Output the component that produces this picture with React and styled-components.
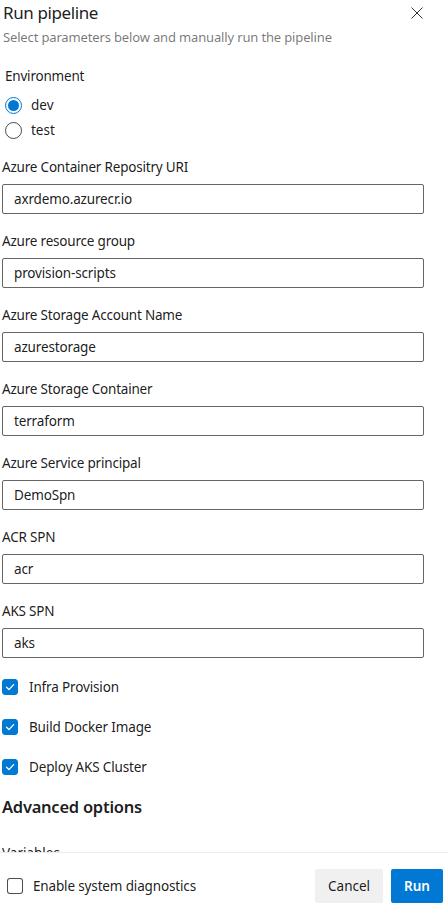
import React from 'react';
import styled, { createGlobalStyle } from 'styled-components';

const GlobalStyle = createGlobalStyle`
  html, body {
    margin: 0;
    padding: 0;
    background: #fff;
  }
  body {
    font-family: "Noto Sans", "Open Sans", sans-serif;
    color: rgba(0, 0, 0, 0.9);
  }
`;

const Panel = styled.div`
  display: flex;
  flex-direction: column;
  width: 448px;
  height: 906px;
  overflow: hidden;
  background: #fff;
`;

const Scroll = styled.div`
  flex: 1;
  overflow: hidden;
  padding: 0 24px 0 2px;
`;

const Header = styled.div`
  display: flex;
  justify-content: space-between;
  align-items: flex-start;
  padding: 0 0 0 1px;
`;

const Title = styled.h1`
  margin: 0;
  font-size: 17px;
  font-weight: 400;
  line-height: 25px;
  letter-spacing: -0.4px;
`;

const Subtitle = styled.div`
  margin-top: 3px;
  font-size: 13px;
  line-height: 18px;
  color: rgba(0, 0, 0, 0.55);
  letter-spacing: -0.15px;
`;

const CloseButton = styled.button`
  display: flex;
  width: 12px;
  height: 12px;
  margin: 7px 1px 0 0;
  padding: 0;
  border: none;
  background: none;
  cursor: pointer;
`;

const Section = styled.div`
  margin-top: ${(p) => p.$top || 0}px;
  padding-left: ${(p) => p.$indent || 0}px;
`;

const Label = styled.div`
  font-size: 13.5px;
  line-height: 20px;
  letter-spacing: -0.2px;
`;

const RadioList = styled.div`
  display: flex;
  flex-direction: column;
  gap: 5px;
  margin-top: 9px;
`;

const RadioRow = styled.label`
  display: flex;
  align-items: center;
  gap: 9px;
  height: 20px;
  font-size: 13.5px;
`;

const RadioCircle = styled.span`
  box-sizing: border-box;
  width: 17px;
  height: 17px;
  border-radius: 50%;
  border: 1px solid ${(p) => (p.$checked ? '#0078d4' : 'rgba(0,0,0,0.7)')};
  display: flex;
  align-items: center;
  justify-content: center;

  &::after {
    content: '';
    display: ${(p) => (p.$checked ? 'block' : 'none')};
    width: 11px;
    height: 11px;
    border-radius: 50%;
    background: #0078d4;
  }
`;

const Field = styled.div`
  margin-top: 17px;
`;

const TextInput = styled.div`
  box-sizing: border-box;
  margin-top: 7px;
  height: 30px;
  border: 1px solid rgba(0, 0, 0, 0.6);
  border-radius: 2px;
  padding: 0 11px;
  display: flex;
  align-items: center;
  font-size: 13.5px;
  letter-spacing: -0.15px;
`;

const CheckList = styled.div`
  display: flex;
  flex-direction: column;
  margin-top: 9px;
`;

const CheckRow = styled.label`
  display: flex;
  align-items: center;
  gap: 11px;
  height: 40px;
  font-size: 13.5px;
  letter-spacing: -0.15px;
`;

const Box = styled.span`
  box-sizing: border-box;
  width: 16px;
  height: 16px;
  border-radius: 3px;
  display: flex;
  align-items: center;
  justify-content: center;
  background: ${(p) => (p.$checked ? '#0078d4' : '#fff')};
  border: 1px solid ${(p) => (p.$checked ? '#0078d4' : 'rgba(0,0,0,0.7)')};
`;

const SectionTitle = styled.h2`
  margin: 8px 0 0;
  font-size: 16.5px;
  font-weight: 600;
  line-height: 24px;
  letter-spacing: -0.25px;
`;

const Faded = styled.div`
  margin-top: 24px;
  font-size: 13.5px;
  line-height: 20px;
`;

const Footer = styled.div`
  flex: 0 0 auto;
  box-sizing: border-box;
  border-top: 1px solid #ebebeb;
  display: flex;
  align-items: center;
  justify-content: space-between;
  padding: 16px 5px 3px 7px;
  background: #fff;
`;

const FooterCheck = styled.label`
  display: flex;
  align-items: center;
  gap: 10px;
  font-size: 13.5px;
  letter-spacing: -0.15px;
`;

const Buttons = styled.div`
  display: flex;
  gap: 8px;
`;

const Button = styled.button`
  height: 34px;
  padding: 0 13px;
  border: none;
  border-radius: 2px;
  font-family: inherit;
  font-size: 13.5px;
  font-weight: ${(p) => (p.$primary ? 600 : 400)};
  color: ${(p) => (p.$primary ? '#fff' : 'rgba(0,0,0,0.9)')};
  background: ${(p) => (p.$primary ? '#0078d4' : '#f0f0f0')};
  cursor: pointer;
`;

const Check = () => (
  <svg width="10" height="10" viewBox="0 0 10 10" fill="none">
    <path d="M1.5 5.2 L4 7.6 L8.6 2.6" stroke="#fff" strokeWidth="1.3" strokeLinecap="round" strokeLinejoin="round" />
  </svg>
);

const fields = [
  ['Azure Container Repositry URI', 'axrdemo.azurecr.io'],
  ['Azure resource group', 'provision-scripts'],
  ['Azure Storage Account Name', 'azurestorage'],
  ['Azure Storage Container', 'terraform'],
  ['Azure Service principal', 'DemoSpn'],
  ['ACR SPN', 'acr'],
  ['AKS SPN', 'aks'],
];

const stages = ['Infra Provision', 'Build Docker Image', 'Deploy AKS Cluster'];

export default function App() {
  return (
    <>
      <GlobalStyle />
      <Panel>
        <Scroll>
          <Header>
            <div>
              <Title>Run pipeline</Title>
              <Subtitle>Select parameters below and manually run the pipeline</Subtitle>
            </div>
            <CloseButton aria-label="Close">
              <svg width="12" height="12" viewBox="0 0 12 12">
                <path d="M0.5 0.5 L11.5 11.5 M11.5 0.5 L0.5 11.5" stroke="#333" strokeWidth="1" />
              </svg>
            </CloseButton>
          </Header>

          <Section $top={20} $indent={3}>
            <Label>Environment</Label>
            <RadioList>
              <RadioRow>
                <RadioCircle $checked />
                dev
              </RadioRow>
              <RadioRow>
                <RadioCircle />
                test
              </RadioRow>
            </RadioList>
          </Section>

          <Section $top={10}>
            {fields.map(([label, value]) => (
              <Field key={label}>
                <Label>{label}</Label>
                <TextInput>{value}</TextInput>
              </Field>
            ))}
          </Section>

          <CheckList>
            {stages.map((s) => (
              <CheckRow key={s}>
                <Box $checked>
                  <Check />
                </Box>
                {s}
              </CheckRow>
            ))}
          </CheckList>

          <SectionTitle>Advanced options</SectionTitle>
          <Faded>Variables</Faded>
        </Scroll>
        <Footer>
          <FooterCheck>
            <Box />
            Enable system diagnostics
          </FooterCheck>
          <Buttons>
            <Button>Cancel</Button>
            <Button $primary>Run</Button>
          </Buttons>
        </Footer>
      </Panel>
    </>
  );
}
